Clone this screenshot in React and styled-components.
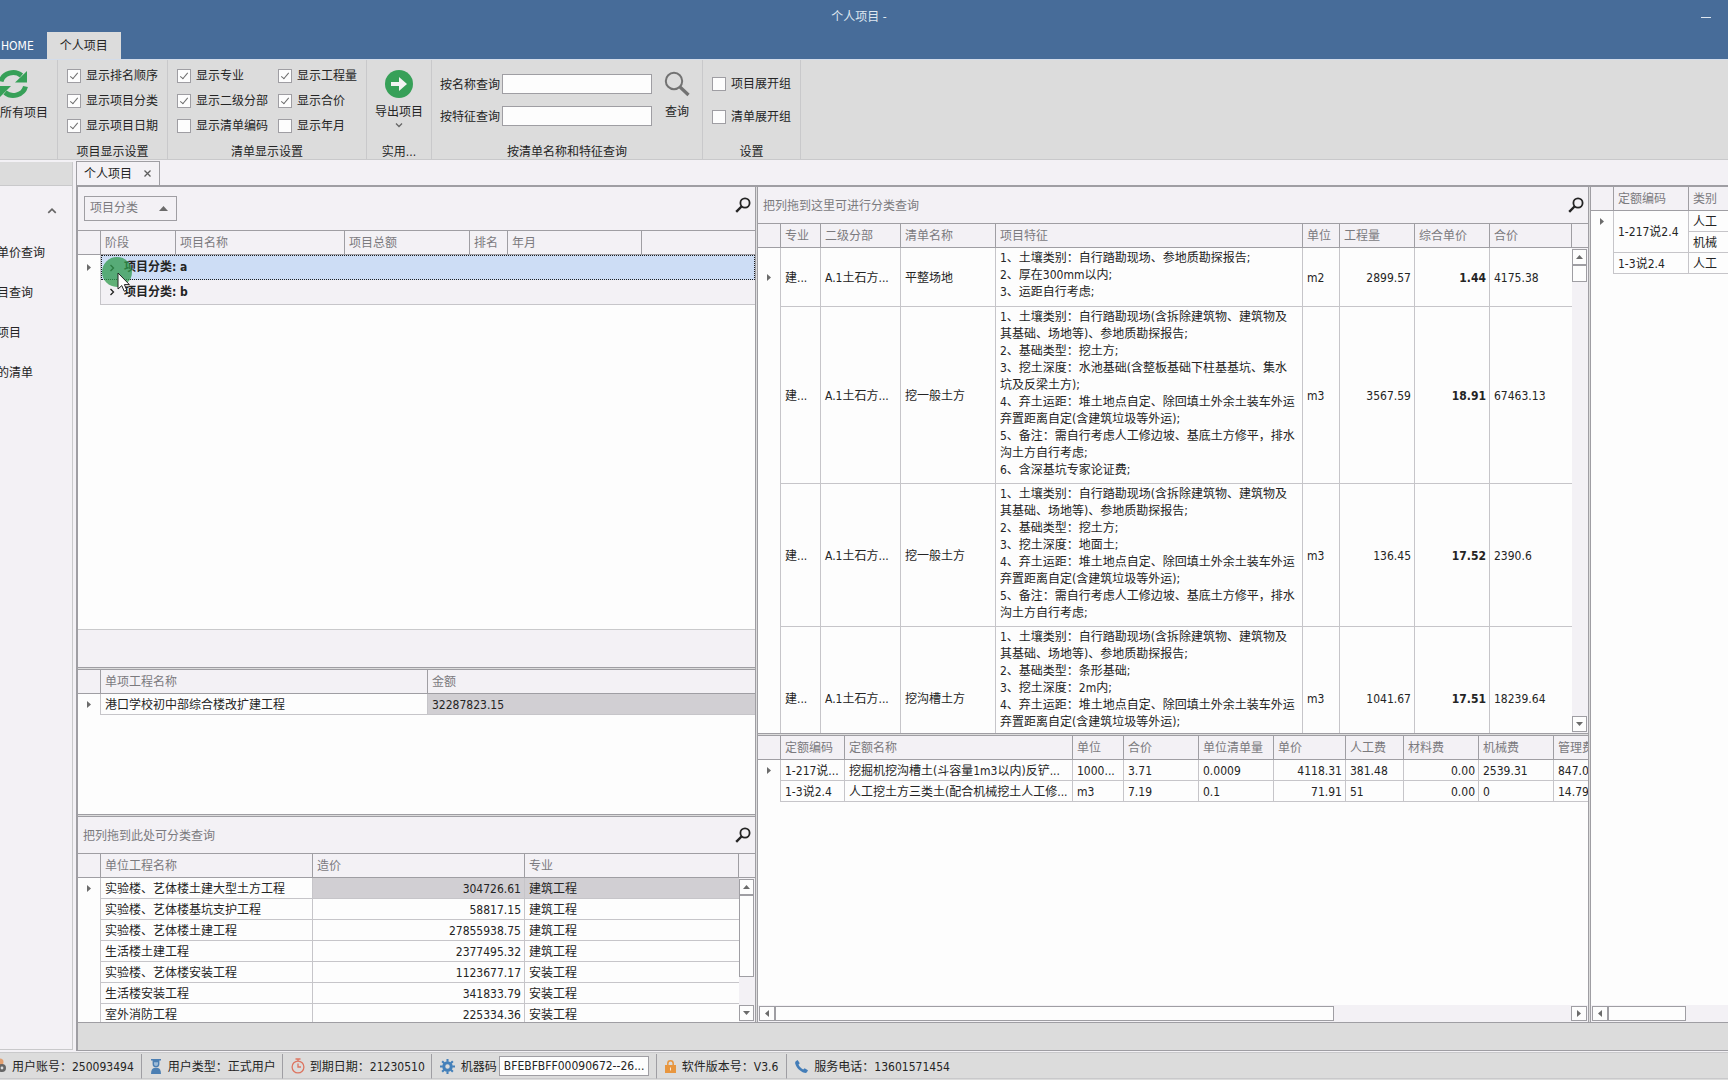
import React from "react";
import styled, { createGlobalStyle, css } from "styled-components";

const color = {
  blue: "#476c99",
  ribbon: "#dcdcdc",
  panel: "#f3f1f5",
  paper: "#fdfdfd",
  line: "#9f9ea3",
  cellLine: "#c6c5c9",
  softLine: "#c9c9cb",
  text: "#242424",
  muted: "#7b7a7e",
  selected: "#d1cfd3",
  focus: "#cdddf5",
  green: "#37a058",
};

const GlobalStyle = createGlobalStyle`
  *, *::before, *::after { box-sizing: border-box; }
  body {
    margin: 0;
    overflow: hidden;
  }
  body, button, input {
    font-family: "DejaVu Sans Condensed", "Noto Sans CJK SC", sans-serif;
    font-size: 12px;
    line-height: 17px;
    color: ${color.text};
  }
  button {
    padding: 0;
    border: 0;
    background: none;
  }
`;

const Window = styled.div`
  display: flex;
  flex-direction: column;
  height: 100vh;
  overflow: hidden;
  background: ${color.panel};
`;

const Text = styled.span`
  padding-top: 2px;
`;

/* ---------- title and ribbon tabs ---------- */

const TitleBar = styled.header`
  display: grid;
  grid-template-columns: 1fr auto 1fr;
  align-items: center;
  height: 32px;
  padding: 2px 10px 0 0;
  background: ${color.blue};
  color: #dfe7f0;
`;

const Title = styled.h1`
  grid-column: 2;
  margin: 0;
  font-size: 12px;
  font-weight: 400;
`;

const Minimize = styled.button`
  justify-self: end;
  width: 24px;
  height: 24px;
  padding: 0 7px;
  &::before {
    content: "";
    display: block;
    height: 1px;
    background: #dfe7f0;
  }
`;

const RibbonTabs = styled.nav`
  display: flex;
  height: 27px;
  background: ${color.blue};
`;

const RibbonTab = styled.button`
  padding: ${(p) => (p.$active ? "2px 13px 0" : "2px 13px 0 1px")};
  background: ${(p) => (p.$active ? color.ribbon : "transparent")};
  color: ${(p) => (p.$active ? color.text : "#ffffff")};
`;

/* ---------- ribbon ---------- */

const Ribbon = styled.div`
  display: flex;
  height: 101px;
  background: ${color.ribbon};
  border-top: 1px solid #d3dcea;
  border-bottom: 1px solid ${color.softLine};
`;

const RibbonGroup = styled.section`
  display: flex;
  flex-direction: column;
  width: ${(p) => p.$width}px;
  flex: none;
  border-right: 1px solid ${color.softLine};
`;

const GroupBody = styled.div`
  flex: 1;
  display: flex;
  justify-content: ${(p) => p.$justify || "flex-start"};
  gap: ${(p) => p.$gap || 10}px;
  padding: ${(p) => p.$padding || "0"};
`;

const GroupCaption = styled.div`
  height: 15px;
  text-align: center;
`;

const CheckStack = styled.div`
  display: flex;
  flex-direction: column;
  gap: ${(p) => p.$gap}px;
`;

const CheckLabel = styled.label`
  display: flex;
  align-items: center;
  gap: 5px;
  height: 17px;
  white-space: nowrap;
`;

const CheckBox = styled.input.attrs({ type: "checkbox" })`
  appearance: none;
  position: relative;
  width: 14px;
  height: 14px;
  margin: 0;
  flex: none;
  border: 1px solid ${color.line};
  background: ${color.paper};
  &:checked::after {
    content: "";
    position: absolute;
    left: 4px;
    top: 1px;
    width: 4px;
    height: 8px;
    border: solid #6d6d6d;
    border-width: 0 1px 1px 0;
    transform: rotate(40deg);
  }
`;

const LargeButton = styled.button`
  display: flex;
  flex-direction: column;
  align-items: ${(p) => p.$align || "center"};
  white-space: nowrap;
  svg { display: block; }
`;

const LargeText = styled.span`
  margin-top: 6px;
`;

const QueryFields = styled.div`
  display: flex;
  flex-direction: column;
  gap: 12px;
  padding-top: 4px;
`;

const QueryField = styled.label`
  display: flex;
  align-items: center;
  gap: 2px;
  height: 20px;
`;

const TextBox = styled.input.attrs({ type: "text" })`
  width: 150px;
  height: 20px;
  padding: 0 4px;
  border: 1px solid ${color.line};
  border-radius: 0;
  background: ${color.paper};
`;

/* ---------- work area ---------- */

const WorkArea = styled.div`
  flex: 1;
  min-height: 0;
  display: flex;
  gap: 3px;
`;

const SidePanel = styled.aside`
  width: 73px;
  flex: none;
  margin: 2px 0 2px;
  border: solid ${color.softLine};
  border-width: 0 1px 1px 0;
  overflow: hidden;
`;

const SideHeader = styled.div`
  height: 24px;
  background: ${color.ribbon};
  border-bottom: 1px solid ${color.softLine};
`;

const SideToggle = styled.button`
  display: block;
  margin: 15px 15px 0 auto;
  height: 20px;
  svg { display: block; }
`;

const SideList = styled.ul`
  display: flex;
  flex-direction: column;
  gap: 23px;
  margin: 24px 0 0;
  padding: 0;
  list-style: none;
  text-indent: -3px;
  white-space: nowrap;
`;

const SideLink = styled.a`
  display: block;
  color: ${color.text};
  text-decoration: none;
`;

const DocArea = styled.main`
  flex: 1;
  min-width: 0;
  display: flex;
  flex-direction: column;
  padding: 1px 0;
`;

const DocTabs = styled.div`
  display: flex;
  height: 24px;
`;

const DocTab = styled.div`
  display: flex;
  align-items: center;
  gap: 11px;
  padding: 0 7px;
  border: 1px solid ${color.line};
  border-bottom: 0;
`;

const CloseTab = styled.button`
  width: 9px;
  height: 9px;
  svg { display: block; }
`;

const DocBody = styled.div`
  flex: 1;
  min-height: 0;
  display: flex;
  flex-direction: column;
  border: solid ${color.line};
  border-width: 2px 0 1px 2px;
  background: ${color.ribbon};
`;

const Columns = styled.div`
  flex: 1;
  min-height: 0;
  display: grid;
  grid-template-columns: minmax(0, 677fr) 3px minmax(0, 830fr) 3px minmax(0, 137fr);
  border-bottom: 1px solid ${color.line};
`;

const DocFooter = styled.div`
  height: 27px;
`;

const Stack = styled.div`
  min-height: 0;
  display: flex;
  flex-direction: column;
`;

const Splitter = styled.div`
  flex: none;
  background: ${color.ribbon};
  border: solid ${color.line};
  border-width: ${(p) => (p.$vertical ? "0 1px" : "1px 0")};
  ${(p) => !p.$vertical && "height: 3px;"}
`;

const Pane = styled.section`
  flex: ${(p) => p.$grow || 1} 1 0;
  min-height: 0;
  display: flex;
  flex-direction: column;
  background: ${color.paper};
  overflow: hidden;
`;

const DropPanel = styled.div`
  flex: none;
  display: flex;
  align-items: flex-start;
  justify-content: space-between;
  padding: 9px 4px 9px ${(p) => p.$inset || 5}px;
  background: ${color.panel};
  border-bottom: 1px solid ${color.line};
  color: ${color.muted};
`;

const DropHint = styled.span`
  height: 18px;
  line-height: 20px;
`;

const GroupChip = styled.button`
  display: flex;
  align-items: center;
  justify-content: space-between;
  width: 93px;
  height: 25px;
  padding: 0 8px 0 5px;
  border: 1px solid ${color.line};
  color: ${color.muted};
`;

const IconButton = styled.button`
  height: 17px;
  svg { display: block; }
`;

const PaneFooter = styled.div`
  flex: none;
  height: 38px;
  background: ${color.panel};
  border-top: 1px solid ${color.softLine};
`;

/* ---------- data grids ---------- */

const GridFrame = styled.div`
  flex: 1;
  min-height: 0;
  display: flex;
`;

const GridView = styled.div`
  flex: 1;
  min-width: 0;
  overflow: hidden;
`;

const Table = styled.table`
  width: 100%;
  table-layout: fixed;
  border-collapse: separate;
  border-spacing: 0;
`;

const cell = css`
  overflow: hidden;
  white-space: nowrap;
  text-align: left;
`;

const HeadCell = styled.th`
  ${cell}
  height: 24px;
  padding: 2px 4px 0;
  font-weight: 400;
  color: ${color.muted};
  background: ${color.panel};
  border: solid ${color.line};
  border-width: 0 ${(p) => (p.$last ? 0 : 1)}px 1px 0;
`;

const Cell = styled.td`
  ${cell}
  height: 21px;
  padding: 2px 3px 0 4px;
  border: solid ${color.cellLine};
  border-width: 0 ${(p) => (p.$last ? 0 : 1)}px 1px 0;
  text-align: ${(p) => (p.$right ? "right" : "left")};
  font-weight: ${(p) => (p.$bold ? 700 : 400)};
  background: ${(p) => (p.$selected ? color.selected : "transparent")};
`;

const FeatureCell = styled(Cell)`
  height: 59px;
  padding: 2px 0 4px 4px;
  vertical-align: top;
  white-space: pre;
`;

const MarkCell = styled.td`
  padding: 0;
  border-right: 1px solid ${color.cellLine};
  text-align: center;
  vertical-align: ${(p) => (p.$top ? "top" : "middle")};
  svg {
    display: block;
    margin: ${(p) => (p.$top ? "7px" : "0")} auto 0;
  }
`;

const GroupCell = styled.td`
  position: relative;
  height: 25px;
  padding: ${(p) => (p.$focused ? "0 6px" : "0 7px")};
  font-weight: 700;
  background: ${(p) => (p.$focused ? color.focus : color.panel)};
  ${(p) =>
    p.$focused
      ? "border: 1px dotted #1d1d1d;"
      : `border-bottom: 1px solid ${color.cellLine};`}
`;

const GroupTitle = styled.div`
  display: flex;
  align-items: center;
  gap: 8px;
`;

const Pointer = styled.span`
  position: absolute;
  z-index: 2;
  left: 0;
  top: 0;
  pointer-events: none;
  svg { display: block; }
`;

const Rail = styled.div`
  width: 16px;
  flex: none;
  display: flex;
  flex-direction: column;
  background: ${color.panel};
`;

const RailCorner = styled.div`
  flex: none;
  height: 24px;
  border-bottom: 1px solid ${color.line};
`;

const Track = styled.div`
  flex: ${(p) => (p.$vertical ? "1" : "none")};
  display: flex;
  flex-direction: ${(p) => (p.$vertical ? "column" : "row")};
  padding: ${(p) => (p.$vertical ? "1px 1px 1px 0" : "1px")};
  background: ${color.panel};
  overflow: hidden;
`;

const ArrowButton = styled.button`
  flex: none;
  display: flex;
  align-items: center;
  justify-content: center;
  width: ${(p) => (p.$vertical ? 15 : 16)}px;
  height: ${(p) => (p.$vertical ? 16 : 15)}px;
  border: 1px solid ${color.line};
  background: ${color.paper};
  ${(p) => p.$end && (p.$vertical ? "margin-top: auto;" : "margin-left: auto;")}
`;

const Thumb = styled.div`
  flex: none;
  border: 1px solid ${color.line};
  background: ${color.paper};
  ${(p) => (p.$vertical ? "width: 15px;" : "height: 15px;")}
`;

/* ---------- status bar ---------- */

const StatusBar = styled.footer`
  display: flex;
  height: 28px;
  padding: 1px 0 1px;
  background: ${color.ribbon};
  border-top: 1px solid ${color.softLine};
`;

const StatusItem = styled.div`
  display: flex;
  align-items: center;
  gap: ${(p) => p.$gap || 6}px;
  padding: ${(p) => p.$padding || "0 6px 0 8px"};
  border-right: ${(p) => (p.$last ? "0" : `1px solid ${color.line}`)};
  border-bottom: 1px solid ${color.softLine};
  flex: ${(p) => (p.$last ? 1 : "none")};
  white-space: nowrap;
  svg { display: block; flex: none; }
`;

/* ---------- drawings ---------- */

const SearchGlyph = () => (
  <svg width="16" height="16" viewBox="0 0 16 16" fill="none" stroke="#242424">
    <circle cx="10" cy="6" r="4.6" strokeWidth="1.8" />
    <path d="M6.5 9.5 1.2 14.8" strokeWidth="2.4" />
  </svg>
);

const RefreshGlyph = () => (
  <svg width="28" height="30" viewBox="0 0 28 30" fill="none">
    <path d="M1 12.5A12.5 11.5 0 0 1 21.5 6.5" stroke={color.green} strokeWidth="5" />
    <path d="M27 2v11.5H15z" fill={color.green} />
    <path d="M25.5 17.5A12.5 11.5 0 0 1 5 23.5" stroke={color.green} strokeWidth="5" />
    <path d="M0 28V17h11z" fill={color.green} />
  </svg>
);

const ExportGlyph = () => (
  <svg width="28" height="28" viewBox="0 0 28 28">
    <circle cx="14" cy="14" r="14" fill={color.green} />
    <path d="M6 12h8V7l8 7-8 7v-5H6z" fill="#f3f3f3" />
  </svg>
);

const MagnifierGlyph = () => (
  <svg width="26" height="28" viewBox="0 0 26 28" fill="none" stroke="#727272">
    <circle cx="10" cy="11" r="8.2" strokeWidth="2" />
    <path d="m16 17 8.5 8" strokeWidth="3.2" />
  </svg>
);

const Chevron = ({ dir = "down", size = 8, stroke = "#666" }) => {
  const d = { down: "M1 2.5 4 5.5 7 2.5", up: "M1 5.5 4 2.5 7 5.5", right: "M2.5 1 5.5 4 2.5 7" }[dir];
  return (
    <svg width={size} height={size} viewBox="0 0 8 8" fill="none" stroke={stroke} strokeWidth="1.3">
      <path d={d} />
    </svg>
  );
};

const Triangle = ({ dir }) => {
  const shape = {
    up: [7, 4, "M0 4 3.5 0 7 4z"],
    down: [7, 4, "M0 0h7L3.5 4z"],
    left: [4, 7, "M4 0v7L0 3.5z"],
    right: [4, 7, "M0 0v7l4-3.5z"],
    sort: [9, 5, "M0 5 4.5 0 9 5z"],
  }[dir];
  return (
    <svg width={shape[0]} height={shape[1]} viewBox={`0 0 ${shape[0]} ${shape[1]}`}>
      <path d={shape[2]} fill="#6b6b6b" />
    </svg>
  );
};

const PointerGlyph = () => (
  <svg width="32" height="38" viewBox="0 0 32 38">
    <circle cx="15" cy="16" r="15" fill="#2f9a4c" fillOpacity="0.75" />
    <path
      d="M16 17v16l3.8-3.4 2.4 5.6 2.6-1.1-2.4-5.5h5z"
      fill="#fff"
      stroke="#222"
      strokeWidth="1"
    />
  </svg>
);

const AccountGlyph = () => (
  <svg width="6" height="16" viewBox="0 0 6 16">
    <circle cx="0" cy="4" r="3.5" fill="#e3a070" />
    <circle cx="2" cy="10" r="4" fill="#666" />
    <circle cx="2" cy="10" r="1.4" fill="#dcdcdc" />
  </svg>
);

const UserGlyph = () => (
  <svg width="12" height="16" viewBox="0 0 12 16">
    <path d="M1 1h10v1.4H9.4V6a3.4 3.4 0 0 1-6.8 0V2.4H1z" fill="#4c7fb3" />
    <path d="M4 4.2h4V6a2 2 0 0 1-4 0z" fill="#9dbbd8" />
    <path d="M1 16c0-4 1.5-6 3-6h4c1.5 0 3 2 3 6z" fill="#4c7fb3" />
  </svg>
);

const TimerGlyph = () => (
  <svg width="14" height="16" viewBox="0 0 14 16" fill="none" stroke="#dd7561" strokeWidth="1.3">
    <circle cx="7" cy="9" r="5.9" />
    <path d="M4.5 1h5M7 1v2M7 5.5V9h3" />
  </svg>
);

const GearGlyph = () => (
  <svg width="15" height="15" viewBox="0 0 16 16" fill="none" stroke="#4480ba">
    <circle cx="8" cy="8" r="4" strokeWidth="3.2" />
    <path
      d="M8 0v3M8 13v3M0 8h3M13 8h3M2.3 2.3l2.2 2.2M11.5 11.5l2.2 2.2M13.7 2.3l-2.2 2.2M4.5 11.5l-2.2 2.2"
      strokeWidth="2.2"
    />
  </svg>
);

const LockGlyph = () => (
  <svg width="11" height="13" viewBox="0 0 11 13">
    <path d="M2.8 6V3.5a2.7 2.7 0 0 1 5.4 0V6" fill="none" stroke="#e8963f" strokeWidth="1.5" />
    <path d="M0 5h11v8H0z" fill="#e8963f" />
    <path d="M5 7.5h1v3H5z" fill="#fbe6cf" />
  </svg>
);

const PhoneGlyph = () => (
  <svg width="13" height="13" viewBox="0 0 13 13">
    <path
      d="M.8 1.2 2.6 0l2.2 3.3-1.3 1.3c.7 2 2.6 4 4.7 4.9l1.4-1.3L13 10.3l-1.1 1.9c-.6.7-1.6.9-2.6.6C5 11.6 1.3 7.8.2 3.6c-.2-.9 0-1.9.6-2.4z"
      fill="#437db8"
    />
  </svg>
);

/* ---------- pieces ---------- */

const Check = ({ label, checked }) => (
  <CheckLabel>
    <CheckBox defaultChecked={checked} />
    <Text>{label}</Text>
  </CheckLabel>
);

const Search = () => (
  <IconButton aria-label="查询">
    <SearchGlyph />
  </IconButton>
);

const HorizontalScroll = ({ thumb, open }) => (
  <Track>
    <ArrowButton aria-label="向左"><Triangle dir="left" /></ArrowButton>
    <Thumb style={{ width: thumb }} />
    {!open && <ArrowButton $end aria-label="向右"><Triangle dir="right" /></ArrowButton>}
  </Track>
);

const VerticalScroll = ({ thumb }) => (
  <Rail>
    <RailCorner />
    <Track $vertical>
      <ArrowButton $vertical aria-label="向上"><Triangle dir="up" /></ArrowButton>
      <Thumb $vertical style={{ height: thumb }} />
      <ArrowButton $vertical $end aria-label="向下"><Triangle dir="down" /></ArrowButton>
    </Track>
  </Rail>
);

const GridHead = ({ columns, lastLine }) => (
  <>
    <colgroup>
      <col style={{ width: 23 }} />
      {columns.map((c, i) => (
        <col key={i} style={c.width ? { width: c.width } : undefined} />
      ))}
    </colgroup>
    <thead>
      <tr>
        <HeadCell aria-label="行" />
        {columns.map((c, i) => (
          <HeadCell key={i} $last={!lastLine && i === columns.length - 1}>{c.title}</HeadCell>
        ))}
      </tr>
    </thead>
  </>
);

const DataGrid = ({ columns, rows, selected = [], lastLine }) => (
  <Table>
    <GridHead columns={columns} lastLine={lastLine} />
    <tbody>
      {rows.map((row, r) => (
        <tr key={r}>
          <MarkCell>{r === 0 && <Triangle dir="right" />}</MarkCell>
          {row.map((value, i) => {
            const Kind = columns[i].feature ? FeatureCell : Cell;
            return (
              <Kind
                key={i}
                $right={columns[i].right}
                $bold={columns[i].bold}
                $last={i === columns.length - 1}
                $selected={r === 0 && selected.includes(i)}
              >
                {value}
              </Kind>
            );
          })}
        </tr>
      ))}
    </tbody>
  </Table>
);

/* ---------- data ---------- */

const projectColumns = [
  { title: "阶段", width: 75 },
  { title: "项目名称", width: 169 },
  { title: "项目总额", width: 125 },
  { title: "排名", width: 38 },
  { title: "年月", width: 134 },
  { title: "" },
];

const singleColumns = [{ title: "单项工程名称", width: 327 }, { title: "金额" }];
const singleRows = [["港口学校初中部综合楼改扩建工程", "32287823.15"]];

const unitColumns = [
  { title: "单位工程名称", width: 212 },
  { title: "造价", width: 212, right: true },
  { title: "专业" },
];
const unitRows = [
  ["实验楼、艺体楼土建大型土方工程", "304726.61", "建筑工程"],
  ["实验楼、艺体楼基坑支护工程", "58817.15", "建筑工程"],
  ["实验楼、艺体楼土建工程", "27855938.75", "建筑工程"],
  ["生活楼土建工程", "2377495.32", "建筑工程"],
  ["实验楼、艺体楼安装工程", "1123677.17", "安装工程"],
  ["生活楼安装工程", "341833.79", "安装工程"],
  ["室外消防工程", "225334.36", "安装工程"],
];

const billColumns = [
  { title: "专业", width: 40 },
  { title: "二级分部", width: 80 },
  { title: "清单名称", width: 95 },
  { title: "项目特征", feature: true },
  { title: "单位", width: 37 },
  { title: "工程量", width: 75, right: true },
  { title: "综合单价", width: 75, right: true, bold: true },
  { title: "合价", width: 82 },
];

const soil = "1、土壤类别：自行踏勘现场(含拆除建筑物、建筑物及\n其基础、场地等)、参地质勘探报告;\n";
const haul = "4、弃土运距：堆土地点自定、除回填土外余土装车外运\n弃置距离自定(含建筑垃圾等外运);\n";
const note = "5、备注：需自行考虑人工修边坡、基底土方修平，排水\n沟土方自行考虑;";

const billRows = [
  ["建...", "A.1土石方...", "平整场地",
    "1、土壤类别：自行踏勘现场、参地质勘探报告;\n2、厚在300mm以内;\n3、运距自行考虑;",
    "m2", "2899.57", "1.44", "4175.38"],
  ["建...", "A.1土石方...", "挖一般土方",
    soil + "2、基础类型：挖土方;\n3、挖土深度：水池基础(含整板基础下柱基基坑、集水\n坑及反梁土方);\n" + haul + note + "\n6、含深基坑专家论证费;",
    "m3", "3567.59", "18.91", "67463.13"],
  ["建...", "A.1土石方...", "挖一般土方",
    soil + "2、基础类型：挖土方;\n3、挖土深度：地面土;\n" + haul + note,
    "m3", "136.45", "17.52", "2390.6"],
  ["建...", "A.1土石方...", "挖沟槽土方",
    soil + "2、基础类型：条形基础;\n3、挖土深度：2m内;\n" + haul + "\n\n",
    "m3", "1041.67", "17.51", "18239.64"],
];

const quotaColumns = [
  { title: "定额编码", width: 64 },
  { title: "定额名称" },
  { title: "单位", width: 51 },
  { title: "合价", width: 75 },
  { title: "单位清单量", width: 75 },
  { title: "单价", width: 72, right: true },
  { title: "人工费", width: 58 },
  { title: "材料费", width: 75, right: true },
  { title: "机械费", width: 75 },
  { title: "管理费", width: 34 },
];
const quotaRows = [
  ["1-217说...", "挖掘机挖沟槽土(斗容量1m3以内)反铲...", "1000...", "3.71", "0.0009", "4118.31", "381.48", "0.00", "2539.31", "847.0"],
  ["1-3说2.4", "人工挖土方三类土(配合机械挖土人工修...", "m3", "7.19", "0.1", "71.91", "51", "0.00", "0", "14.79"],
];

/* ---------- page ---------- */

export default function App() {
  return (
    <Window>
      <GlobalStyle />
      <TitleBar>
        <Title>个人项目 -</Title>
        <Minimize aria-label="最小化" />
      </TitleBar>
      <RibbonTabs>
        <RibbonTab>HOME</RibbonTab>
        <RibbonTab $active>个人项目</RibbonTab>
      </RibbonTabs>

      <Ribbon>
        <RibbonGroup $width={58}>
          <GroupBody $padding="9px 0 0 0">
            <LargeButton $align="flex-start">
              <RefreshGlyph />
              <LargeText>所有项目</LargeText>
            </LargeButton>
          </GroupBody>
        </RibbonGroup>

        <RibbonGroup $width={110}>
          <GroupBody $padding="7px 0 0 9px">
            <CheckStack $gap={8}>
              <Check label="显示排名顺序" checked />
              <Check label="显示项目分类" checked />
              <Check label="显示项目日期" checked />
            </CheckStack>
          </GroupBody>
          <GroupCaption>项目显示设置</GroupCaption>
        </RibbonGroup>

        <RibbonGroup $width={199}>
          <GroupBody $padding="7px 0 0 9px">
            <CheckStack $gap={8}>
              <Check label="显示专业" checked />
              <Check label="显示二级分部" checked />
              <Check label="显示清单编码" />
            </CheckStack>
            <CheckStack $gap={8}>
              <Check label="显示工程量" checked />
              <Check label="显示合价" checked />
              <Check label="显示年月" />
            </CheckStack>
          </GroupBody>
          <GroupCaption>清单显示设置</GroupCaption>
        </RibbonGroup>

        <RibbonGroup $width={65}>
          <GroupBody $justify="center" $padding="10px 0 0 0">
            <LargeButton>
              <ExportGlyph />
              <LargeText>导出项目</LargeText>
              <Chevron />
            </LargeButton>
          </GroupBody>
          <GroupCaption>实用...</GroupCaption>
        </RibbonGroup>

        <RibbonGroup $width={271}>
          <GroupBody $gap={12} $padding="10px 0 0 8px">
            <QueryFields>
              <QueryField><Text>按名称查询</Text><TextBox /></QueryField>
              <QueryField><Text>按特征查询</Text><TextBox /></QueryField>
            </QueryFields>
            <LargeButton>
              <MagnifierGlyph />
              <LargeText>查询</LargeText>
            </LargeButton>
          </GroupBody>
          <GroupCaption>按清单名称和特征查询</GroupCaption>
        </RibbonGroup>

        <RibbonGroup $width={98}>
          <GroupBody $padding="15px 0 0 9px">
            <CheckStack $gap={16}>
              <Check label="项目展开组" />
              <Check label="清单展开组" />
            </CheckStack>
          </GroupBody>
          <GroupCaption>设置</GroupCaption>
        </RibbonGroup>
      </Ribbon>

      <WorkArea>
        <SidePanel>
          <SideHeader />
          <SideToggle aria-label="收起">
            <Chevron dir="up" size={10} />
          </SideToggle>
          <SideList>
            <li><SideLink href="#price">单价查询</SideLink></li>
            <li><SideLink href="#item">目查询</SideLink></li>
            <li><SideLink href="#project">项目</SideLink></li>
            <li><SideLink href="#bill">的清单</SideLink></li>
          </SideList>
        </SidePanel>

        <DocArea>
          <DocTabs>
            <DocTab>
              <Text>个人项目</Text>
              <CloseTab aria-label="关闭">
                <svg width="9" height="9" viewBox="0 0 9 9" stroke="#5c5c5c" strokeWidth="1.3">
                  <path d="m1.5 1.5 6 6M7.5 1.5l-6 6" />
                </svg>
              </CloseTab>
            </DocTab>
          </DocTabs>
          <DocBody>
            <Columns>
              <Stack>
                <Pane $grow={480}>
                  <DropPanel $inset={6}>
                    <GroupChip>
                      项目分类
                      <Triangle dir="sort" />
                    </GroupChip>
                    <Search />
                  </DropPanel>
                  <GridFrame>
                    <GridView>
                      <Table>
                        <GridHead columns={projectColumns} />
                        <tbody>
                          <tr>
                            <MarkCell><Triangle dir="right" /></MarkCell>
                            <GroupCell colSpan={6} $focused>
                              <GroupTitle>
                                <Chevron dir="right" stroke="#222" />
                                项目分类: a
                              </GroupTitle>
                              <Pointer><PointerGlyph /></Pointer>
                            </GroupCell>
                          </tr>
                          <tr>
                            <MarkCell />
                            <GroupCell colSpan={6}>
                              <GroupTitle>
                                <Chevron dir="right" stroke="#222" />
                                项目分类: b
                              </GroupTitle>
                            </GroupCell>
                          </tr>
                        </tbody>
                      </Table>
                    </GridView>
                  </GridFrame>
                  <PaneFooter />
                </Pane>
                <Splitter />
                <Pane $grow={144}>
                  <GridView>
                    <DataGrid columns={singleColumns} rows={singleRows} selected={[1]} />
                  </GridView>
                </Pane>
                <Splitter />
                <Pane $grow={205}>
                  <DropPanel>
                    <DropHint>把列拖到此处可分类查询</DropHint>
                    <Search />
                  </DropPanel>
                  <GridFrame>
                    <GridView>
                      <DataGrid columns={unitColumns} rows={unitRows} selected={[1, 2]} lastLine />
                    </GridView>
                    <VerticalScroll thumb={82} />
                  </GridFrame>
                </Pane>
              </Stack>

              <Splitter $vertical />

              <Stack>
                <Pane $grow={546}>
                  <DropPanel>
                    <DropHint>把列拖到这里可进行分类查询</DropHint>
                    <Search />
                  </DropPanel>
                  <GridFrame>
                    <GridView>
                      <DataGrid columns={billColumns} rows={billRows} lastLine />
                    </GridView>
                    <VerticalScroll thumb={17} />
                  </GridFrame>
                </Pane>
                <Splitter />
                <Pane $grow={286}>
                  <GridView>
                    <DataGrid columns={quotaColumns} rows={quotaRows} />
                  </GridView>
                  <HorizontalScroll thumb="67.5%" />
                </Pane>
              </Stack>

              <Splitter $vertical />

              <Pane>
                <GridView>
                  <Table>
                    <GridHead columns={[{ title: "定额编码", width: 75 }, { title: "类别" }]} />
                    <tbody>
                      <tr>
                        <MarkCell rowSpan={2} $top><Triangle dir="right" /></MarkCell>
                        <Cell rowSpan={2}>1-217说2.4</Cell>
                        <Cell $last>人工</Cell>
                      </tr>
                      <tr>
                        <Cell $last>机械</Cell>
                      </tr>
                      <tr>
                        <MarkCell />
                        <Cell>1-3说2.4</Cell>
                        <Cell $last>人工</Cell>
                      </tr>
                    </tbody>
                  </Table>
                </GridView>
                <HorizontalScroll thumb="58%" open />
              </Pane>
            </Columns>
            <DocFooter />
          </DocBody>
        </DocArea>
      </WorkArea>

      <StatusBar>
        <StatusItem $padding="0 7px 0 0">
          <AccountGlyph />
          <Text>用户账号：250093494</Text>
        </StatusItem>
        <StatusItem>
          <UserGlyph />
          <Text>用户类型：正式用户</Text>
        </StatusItem>
        <StatusItem $gap={5}>
          <TimerGlyph />
          <Text>到期日期：21230510</Text>
        </StatusItem>
        <StatusItem $padding="0 7px 0 8px">
          <GearGlyph />
          <QueryField>
            <Text>机器码</Text>
            <TextBox readOnly defaultValue="BFEBFBFF00090672--26..." />
          </QueryField>
        </StatusItem>
        <StatusItem $padding="0 8px">
          <LockGlyph />
          <Text>软件版本号：V3.6</Text>
        </StatusItem>
        <StatusItem $last>
          <PhoneGlyph />
          <Text>服务电话：13601571454</Text>
        </StatusItem>
      </StatusBar>
    </Window>
  );
}
